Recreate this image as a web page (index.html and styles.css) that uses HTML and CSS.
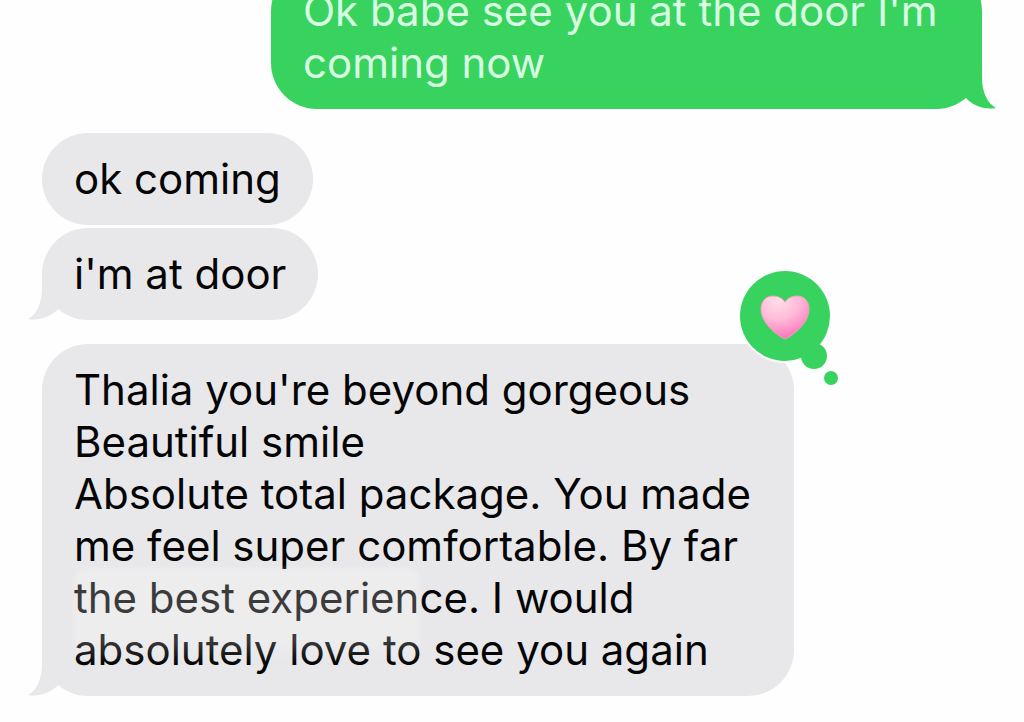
FILE: index.html
```html
<!DOCTYPE html>
<html lang="en">
<head>
<meta charset="utf-8">
<meta name="viewport" content="width=device-width, initial-scale=1">
<title>Messages</title>
<link rel="stylesheet" href="styles.css">
</head>
<body>
<main class="thread">
  <div class="group group-sent">
    <div class="bubble">
      <svg class="tail" viewBox="0 0 42 46" aria-hidden="true"><path d="M14 0V14C14 29 9 40 0 45C12 47 23 43 31 34L40 10Z"/></svg>
      <p class="text">Ok babe see you at the door I'm coming now</p>
    </div>
  </div>
  <div class="group">
    <div class="bubble"><p class="text">ok coming</p></div>
    <div class="bubble">
      <svg class="tail" viewBox="0 0 42 46" aria-hidden="true"><path d="M14 0V14C14 29 9 40 0 45C12 47 23 43 31 34L40 10Z"/></svg>
      <p class="text">i'm at door</p>
    </div>
  </div>
  <div class="group">
    <div class="bubble bubble-faded">
      <svg class="tail" viewBox="0 0 42 46" aria-hidden="true"><path d="M14 0V14C14 29 9 40 0 45C12 47 23 43 31 34L40 10Z"/></svg>
      <p class="text">Thalia you're beyond gorgeous<br>Beautiful smile<br>Absolute total package. You made me feel super comfortable. By far the best experience. I would absolutely love to see you again</p>
      <svg class="reaction" viewBox="0 0 104 118" role="img" aria-label="Heart reaction">
        <defs>
          <radialGradient id="heart" cx="0.35" cy="0.1" r="0.9">
            <stop offset="0" stop-color="#ffdde8"/>
            <stop offset="0.5" stop-color="#ffbbd8"/>
            <stop offset="1" stop-color="#fb74ba"/>
          </radialGradient>
        </defs>
        <g class="reaction-halo"><circle cx="49" cy="48" r="47"/><circle cx="78" cy="88" r="15"/></g>
        <g class="reaction-fill"><circle cx="49" cy="48" r="45"/><circle cx="78" cy="88" r="13"/><circle cx="95" cy="110" r="7"/></g>
        <path fill="url(#heart)" stroke="#eca4ba" stroke-width="1" d="M49 71C40 67 25 55 25 41C25 33 30 28 37 28C43 28 47 31 49 34C51 31 55 28 61 28C68 28 73 33 73 41C73 55 58 67 49 71Z"/>
      </svg>
    </div>
  </div>
</main>
</body>
</html>
```
FILE: styles.css
```css
:root {
  --sent: #38d35f;
  --received: #e8e8ea;
}

* {
  box-sizing: border-box;
}

body {
  margin: 0;
  background: #fefefe;
  font-family: Inter, "Liberation Sans", sans-serif;
}

.thread {
  display: flex;
  flex-direction: column;
  justify-content: flex-end;
  gap: 24px;
  height: 100vh;
  padding: 0 42px 26px;
  overflow: hidden;
}

.group {
  display: flex;
  flex-direction: column;
  align-items: flex-start;
  gap: 3px;
}

.group-sent {
  align-items: flex-end;
}

.bubble {
  position: relative;
  max-width: 80%;
  padding: 20px 32px;
  border-radius: 46px;
  background: var(--received);
  color: #050506;
}

.group-sent .bubble {
  max-width: min(76%, 711px);
  background: var(--sent);
  color: #d8fce1;
}

.text {
  margin: 0;
  font-size: 42px;
  line-height: 52px;
}

.tail {
  position: absolute;
  bottom: 0;
  left: -14px;
  width: 42px;
  height: 46px;
  fill: var(--received);
}

.group-sent .tail {
  right: -14px;
  left: auto;
  fill: var(--sent);
  transform: scaleX(-1);
}

/* Soft translucent patch over the last two lines */
.bubble-faded::after {
  content: "";
  position: absolute;
  bottom: 32px;
  left: 32px;
  width: 346px;
  height: 96px;
  border-radius: 12px;
  background: linear-gradient(rgba(255, 255, 255, 0.22) 75%, rgba(255, 255, 255, 0));
  filter: blur(2px);
}

.reaction {
  position: absolute;
  top: -76px;
  right: -46px;
  width: 104px;
  height: 118px;
}

.reaction-halo {
  fill: #fefefe;
}

.reaction-fill {
  fill: var(--sent);
}
```
